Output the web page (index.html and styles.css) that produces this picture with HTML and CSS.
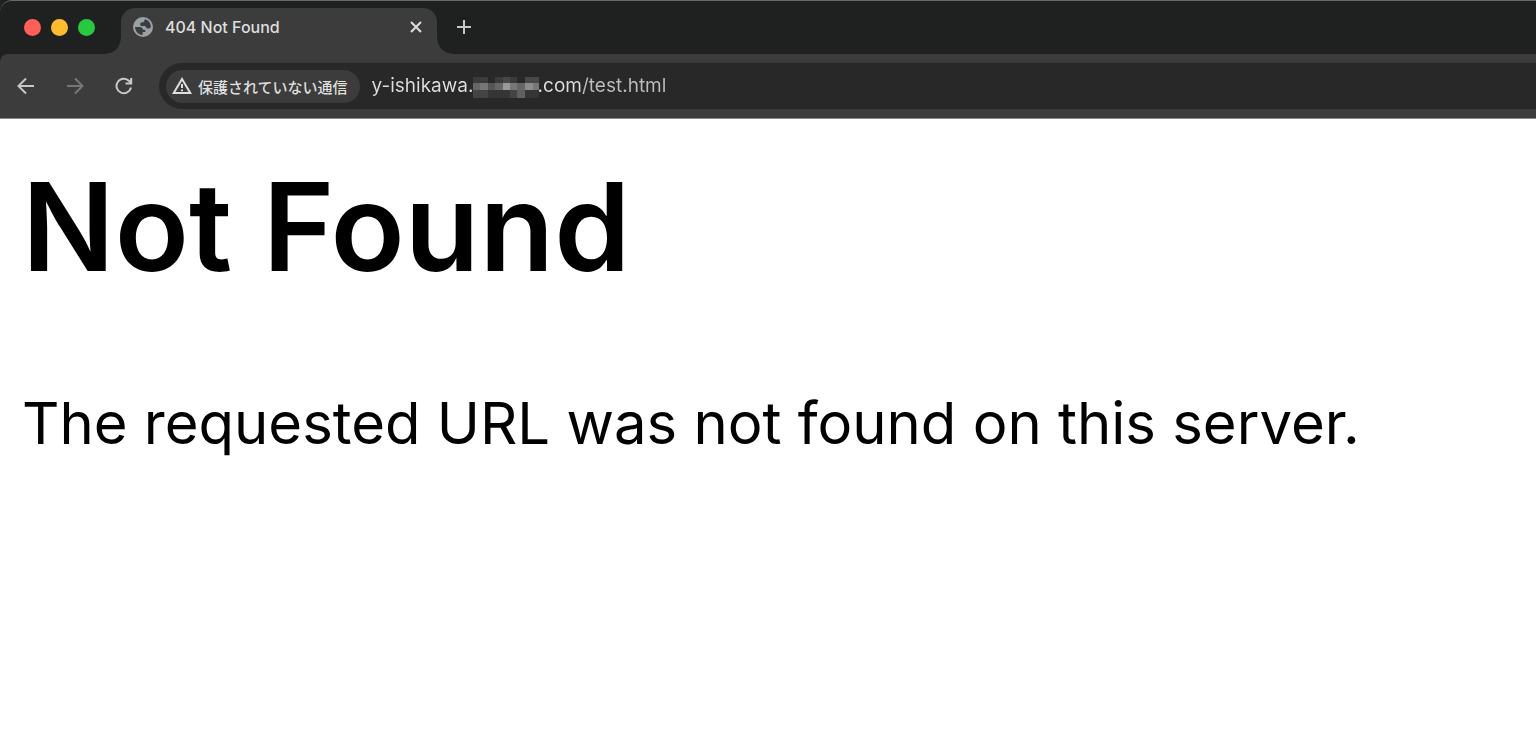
FILE: index.html
```html
<!DOCTYPE html>
<html lang="ja">
<head>
    <meta charset="UTF-8">
    <meta name="viewport" content="width=device-width, initial-scale=1.0">
    <title>404 Not Found</title>
    <link rel="stylesheet" href="styles.css">
</head>
<body>
    <header class="browser">
        <div class="tab-strip">
            <div class="window-controls">
                <button class="dot close" aria-label="Close window"></button>
                <button class="dot minimize" aria-label="Minimize window"></button>
                <button class="dot zoom" aria-label="Zoom window"></button>
            </div>
            <div class="tab">
                <svg class="favicon" viewBox="0 0 20 20">
                    <circle cx="10" cy="10" r="10" fill="#9aa0a6"/>
                    <path d="M12 2.300C15.500 3.200 17.800 6.300 17.900 9.900 17 11.300 15.500 11.800 13.900 11.200 12.900 10.800 12.900 9.400 12 9.100H9C7.800 9.100 7.200 8.400 7.200 7.400 7.200 6 8 5.200 9.200 5.200H10.500C11.500 5.200 11 3.400 12 2.300zM2 10.100H6.500C8.600 10.100 9.700 11.100 9.900 12.800H12.300V15H10.400C9.700 15 9.500 15.500 9.500 18 5.300 17.700 2.100 14.400 2 10.100z" fill="#3c3c3c"/>
                </svg>
                <span class="tab-title">404 Not Found</span>
                <button class="tab-close" aria-label="Close tab">
                    <svg width="12" height="12" viewBox="0 0 12 12"><path d="M1 1l10 10M11 1L1 11"/></svg>
                </button>
            </div>
            <button class="new-tab" aria-label="New tab">
                <svg width="14" height="14" viewBox="0 0 14 14"><path d="M7 0v14M0 7h14"/></svg>
            </button>
        </div>
        <div class="toolbar">
            <nav class="nav-buttons">
                <button aria-label="Back">
                    <svg width="18" height="18" viewBox="0 0 18 18"><path d="M17 9H2M9 1.500L1.500 9 9 16.500"/></svg>
                </button>
                <button aria-label="Forward" disabled>
                    <svg width="18" height="18" viewBox="0 0 18 18"><path d="M1 9h15M9 1.500L16.500 9 9 16.500"/></svg>
                </button>
                <button aria-label="Reload">
                    <svg width="18" height="18" viewBox="0 0 18 18"><path d="M16 10.500A7.300 7.300 0 1 1 14.200 4L16 6M16.200 1v5.500H10.500"/></svg>
                </button>
            </nav>
            <form class="address-bar">
                <button type="button" class="security-chip">
                    <svg width="20" height="18" viewBox="0 0 20 18">
                        <path d="M10 2L1.700 16.100h16.600z"/>
                        <path d="M10 7v4M10 12.500v1.800"/>
                    </svg>
                    保護されていない通信
                </button>
                <div class="url">
                    <input type="text" aria-label="URL" value="y-ishikawa.&nbsp;&nbsp;&nbsp;&nbsp;&nbsp;&nbsp;&nbsp;&nbsp;&nbsp;&nbsp;&nbsp;&nbsp;.com/test.html">
                    <svg class="mosaic" viewBox="0 0 66 21" shape-rendering="crispEdges">
                        <path d="M0 0h15v6H0zM22 0h22v6H22z" fill="#3b3b3b"/>
                        <path d="M30 0h7v6h-7zM52 0h14v6H52z" fill="#484848"/>
                        <path d="M0 6h66v7H0z" fill="#666"/>
                        <path d="M7 6h8v7H7zM37 6h7v7h-7zM59 6h7v7h-7z" fill="#777"/>
                        <path d="M15 6h7v7h-7z" fill="#555"/>
                        <path d="M30 6h7v7h-7z" fill="#999"/>
                        <path d="M52 6h8v7h-8z" fill="#8c8c8c"/>
                        <path d="M0 13h66v8H0z" fill="#353535"/>
                        <path d="M0 13h15v8H0zM37 13h7v8h-7z" fill="#444"/>
                        <path d="M44 13h8v8h-8z" fill="#606060"/>
                    </svg>
                </div>
            </form>
        </div>
    </header>
    <main class="page">
        <h1>Not Found</h1>
        <p>The requested URL was not found on this server.</p>
    </main>
</body>
</html>
```
FILE: styles.css
```css
:root {
    --strip: #1f2120;
    --bar: #3c3c3c;
    --field: #282828;
    --text: #dedede;
    --icon: #c7c7c7;
}

* {
    box-sizing: border-box;
}

body {
    margin: 0;
    background: #fff;
    color: #000;
    font-family: Inter, "Noto Sans CJK JP", sans-serif;
}

button {
    display: flex;
    align-items: center;
    justify-content: center;
    padding: 0;
    border: 0;
    background: none;
    color: var(--icon);
    font: inherit;
}

button path {
    fill: none;
    stroke: currentColor;
    stroke-width: 2;
}

.browser {
    background: var(--strip);
    border-bottom: 1px solid #8a8a8a;
}

.tab-strip {
    display: flex;
    height: 54px;
    padding: 7px 24px 0;
    border-top: 1px solid #666a68;
    border-top-left-radius: 12px;
}

.window-controls {
    display: flex;
    gap: 10px;
    padding-top: 11px;
    margin-right: 26px;
}

.dot {
    width: 17px;
    height: 17px;
    border-radius: 50%;
}

.close {
    background: #ff5f57;
}

.minimize {
    background: #febc2e;
}

.zoom {
    background: #28c840;
}

.tab {
    position: relative;
    display: flex;
    align-items: center;
    width: 316px;
    padding: 0 15px 8px 12px;
    border-radius: 14px 14px 0 0;
    background: var(--bar);
}

/* curved feet where the tab meets the toolbar */
.tab::before,
.tab::after {
    content: '';
    position: absolute;
    bottom: 0;
    width: 15px;
    height: 15px;
}

.tab::before {
    right: 100%;
    background: radial-gradient(circle at 0 0, transparent 14px, var(--bar) 15px);
}

.tab::after {
    left: 100%;
    background: radial-gradient(circle at 100% 0, transparent 14px, var(--bar) 15px);
}

.favicon {
    width: 20px;
    height: 20px;
    margin-right: 12px;
}

.tab-title {
    flex: 1;
    color: var(--text);
    font-size: 16px;
    font-weight: 500;
}

.tab-close {
    color: var(--text);
}

.new-tab {
    height: 38px;
    margin-left: 20px;
}

.toolbar {
    display: flex;
    align-items: center;
    padding: 9px 0 9px 17px;
    border-top-left-radius: 8px;
    background: var(--bar);
}

.nav-buttons {
    display: flex;
    gap: 31px;
    margin-right: 26px;
}

.nav-buttons button:disabled {
    color: #777;
}

.address-bar {
    display: flex;
    flex: 1;
    align-items: center;
    gap: 12px;
    height: 46px;
    padding-left: 7px;
    border-radius: 23px 0 0 23px;
    background: var(--field);
}

.security-chip {
    gap: 6px;
    height: 33px;
    padding: 0 12px 0 6px;
    border-radius: 17px;
    background: var(--bar);
    color: var(--text);
    font-size: 15px;
    font-weight: 500;
}

.url {
    position: relative;
    flex: 1;
}

.url input {
    display: block;
    width: 100%;
    padding: 0;
    border: 0;
    outline: 0;
    background: linear-gradient(90deg, var(--text) 210px, #bdbdbd 210px);
    background-clip: text;
    color: transparent;
    font: 19px/26px Inter, sans-serif;
}

/* hidden part of the host name */
.mosaic {
    position: absolute;
    top: 4px;
    left: 101px;
    width: 66px;
    height: 21px;
}

.page {
    padding: 32px 22px;
}

h1 {
    margin: 0 0 80px;
    font-size: 122px;
    font-weight: 600;
    line-height: 152px;
}

p {
    margin: 0;
    font-size: 58px;
    line-height: 80px;
}
```
